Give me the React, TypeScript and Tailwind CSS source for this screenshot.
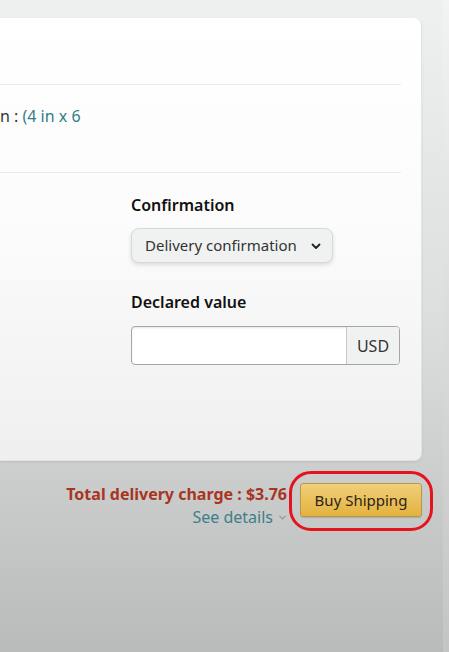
import React from "react";

export default function App() {
  return (
    <div
      className="relative flex h-[652px] w-[449px] overflow-hidden bg-gradient-to-b from-[#eff0f0] via-[#dcdddd] to-[#b9baba] text-[#0f1111]"
      style={{ fontFamily: '"Noto Sans", "Open Sans", Arial, sans-serif' }}
    >
      <div className="flex w-[443px] flex-col pt-[18px]">
        {/* card */}
        <div className="flex h-[443px] w-[422px] flex-col rounded-r-lg border-r border-b border-[#e2e3e3] bg-gradient-to-b from-white via-[#fbfbfb] to-[#efefef] shadow-[0_1px_2px_rgba(0,0,0,0.08)]">
          <div className="mr-[20px] h-[67px] border-b border-[#ececec]" />
          <div className="mr-[20px] flex h-[88px] items-start border-b border-[#ececec] pt-[20px]">
            <span className="text-[16px] leading-[22px] text-[#333]">n :&nbsp;</span>
            <span className="text-[16px] leading-[22px] text-[#2f7f88]">(4 in x 6</span>
          </div>
          <div className="flex flex-col pl-[131px] pt-[21px]">
            <div className="text-[16px] font-semibold leading-[22px] text-[#111]">Confirmation</div>
            <div className="mt-[12px] flex h-[35px] w-[202px] items-center justify-between rounded-[8px] border border-[#d5d9d9] bg-[#f0f2f2] pl-[13px] pr-[10px] shadow-[0_2px_4px_rgba(0,0,0,0.12)]">
              <span className="text-[15px] text-[#333]">Delivery confirmation</span>
              <svg width="12" height="12" viewBox="0 0 12 12" fill="none">
                <path d="M2.5 4.5 L6 8 L9.5 4.5" stroke="#222" strokeWidth="1.8" strokeLinecap="round" strokeLinejoin="round" />
              </svg>
            </div>
            <div className="mt-[28px] text-[16px] font-semibold leading-[22px] text-[#111]">Declared value</div>
            <div className="mt-[13px] flex h-[39px] w-[269px] overflow-hidden rounded-[4px] border border-[#a6a6a6] bg-white shadow-[inset_0_1px_2px_rgba(0,0,0,0.1)]">
              <div className="flex-1" />
              <div className="flex w-[53px] items-center justify-center border-l border-[#c7c7c7] bg-[#f0f2f2] text-[16px] text-[#333]">
                USD
              </div>
            </div>
          </div>
        </div>

        {/* footer */}
        <div className="mt-[22px] flex w-[422px] items-start justify-end gap-[13px]">
          <div className="flex flex-col items-end">
            <div className="text-[16px] font-bold leading-[22px] text-[#a8351f]">Total delivery charge : $3.76</div>
            <div className="mt-[1px] flex items-center gap-[5px] text-[16px] leading-[22px] text-[#3d7f88]">
              See details
              <svg width="9" height="9" viewBox="0 0 10 10" fill="none">
                <path d="M2 3.5 L5 6.5 L8 3.5" stroke="#8a9a9c" strokeWidth="1.3" strokeLinecap="round" />
              </svg>
            </div>
          </div>
          <div className="flex h-[34px] w-[122px] items-center justify-center rounded-[3px] border border-[#b89a4a] bg-gradient-to-b from-[#f0cf78] to-[#e4b23c] text-[15px] text-[#2b2416] shadow-[0_1px_1px_rgba(0,0,0,0.15)]">
            Buy Shipping
          </div>
        </div>
      </div>
      <div className="w-[6px] bg-gradient-to-b from-[#f3f3f3] to-[#c4c4c4]" />

      {/* annotation ring */}
      <div className="pointer-events-none absolute left-[289px] top-[471px] h-[60px] w-[144px] rounded-[22px] border-[3px] border-[#e5131d]" />
    </div>
  );
}
